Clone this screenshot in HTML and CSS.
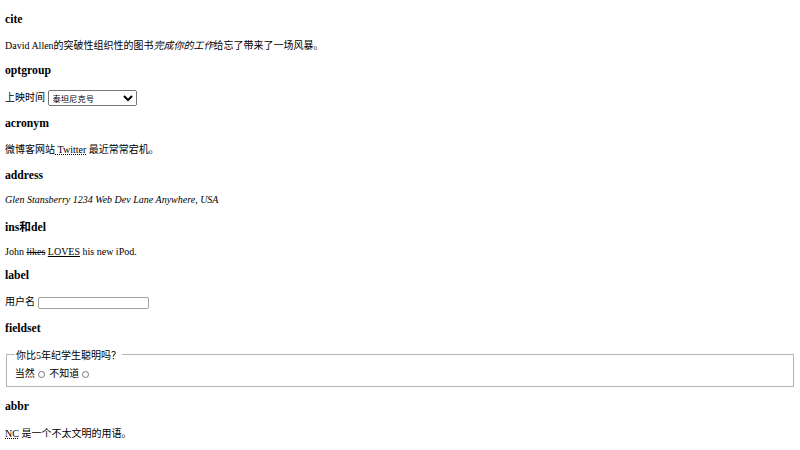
FILE: index.html
```html
<!DOCTYPE html>
<html lang="zh-CN">
  <head>
    <meta charset="UTF-8" />
    <meta name="viewport" content="width=device-width, initial-scale=1.0" />
    <title>HTML 标签</title>
    <link rel="stylesheet" href="styles.css">
  </head>
  <body>
    <h3 class="first">cite</h3>
    <p>David Allen的突破性组织性的图书<cite>完成你的工作</cite>给忘了带来了一场风暴。</p>

    <h3>optgroup</h3>
    <p>
      <label for="movie">上映时间</label>
      <select id="movie" class="movie-select">
        <optgroup label="1997">
          <option>泰坦尼克号</option>
          <option>侏罗纪公园：失落的世界</option>
        </optgroup>
        <optgroup label="1999">
          <option>黑客帝国</option>
          <option>搏击俱乐部</option>
        </optgroup>
      </select>
    </p>

    <h3>acronym</h3>
    <p class="loose">微博客网站<acronym title="一个流行的微博客服务"> Twitter</acronym> 最近常常宕机。</p>

    <h3>address</h3>
    <address class="loose">Glen Stansberry 1234 Web Dev Lane Anywhere, USA</address>

    <h3>ins和del</h3>
    <p>John <del>likes</del> <ins>LOVES</ins> his new iPod.</p>

    <h3>label</h3>
    <p class="loose">
      <label for="username">用户名</label>
      <input type="text" id="username" class="text-input" />
    </p>

    <h3>fieldset</h3>
    <fieldset class="loose">
      <legend>你比5年纪学生聪明吗？</legend>
      当然<input type="radio" name="smart" value="yes" class="radio" />
      不知道<input type="radio" name="smart" value="no" class="radio" />
    </fieldset>

    <h3>abbr</h3>
    <p><abbr title="Not Civilized">NC</abbr> 是一个不太文明的用语。</p>
  </body>
</html>
```

FILE: styles.css
```css
body {
  margin: 5px;
  font-family: "Liberation Serif", "Noto Sans CJK SC", serif;
  font-size: 10px;
  color: #000;
  background: #fff;
}

h3 {
  font-size: 11.7px;
  font-weight: bold;
  margin: 11.7px 0;
}

h3.first {
  margin-top: 7.7px;
}

p {
  margin: 10px 0;
}

address {
  font-style: italic;
  margin: 10px 0;
}

.loose {
  margin-bottom: 12.7px;
}

acronym,
abbr {
  text-decoration: underline dotted;
}

.movie-select {
  width: 89px;
  font-size: 8.3px;
  font-family: "Noto Sans CJK SC", sans-serif;
  padding: 0;
  margin: -1.5px 0;
  vertical-align: middle;
}

.text-input {
  width: 111px;
  height: 12px;
  box-sizing: border-box;
  border: 1px solid #a0a0a0;
  border-radius: 2px;
  padding: 0 1px;
  font-size: 8.3px;
  vertical-align: middle;
}

fieldset {
  margin: 0 1.25px;
  padding: 3.5px 7.5px 6.25px;
  border: 1px solid #b4b4b4;
}

fieldset.loose {
  margin-bottom: 12.7px;
}

legend {
  padding: 0 1.25px;
}

.radio {
  width: 7px;
  height: 7px;
  margin: 2px 2px 0 3px;
  vertical-align: -1px;
}
```
